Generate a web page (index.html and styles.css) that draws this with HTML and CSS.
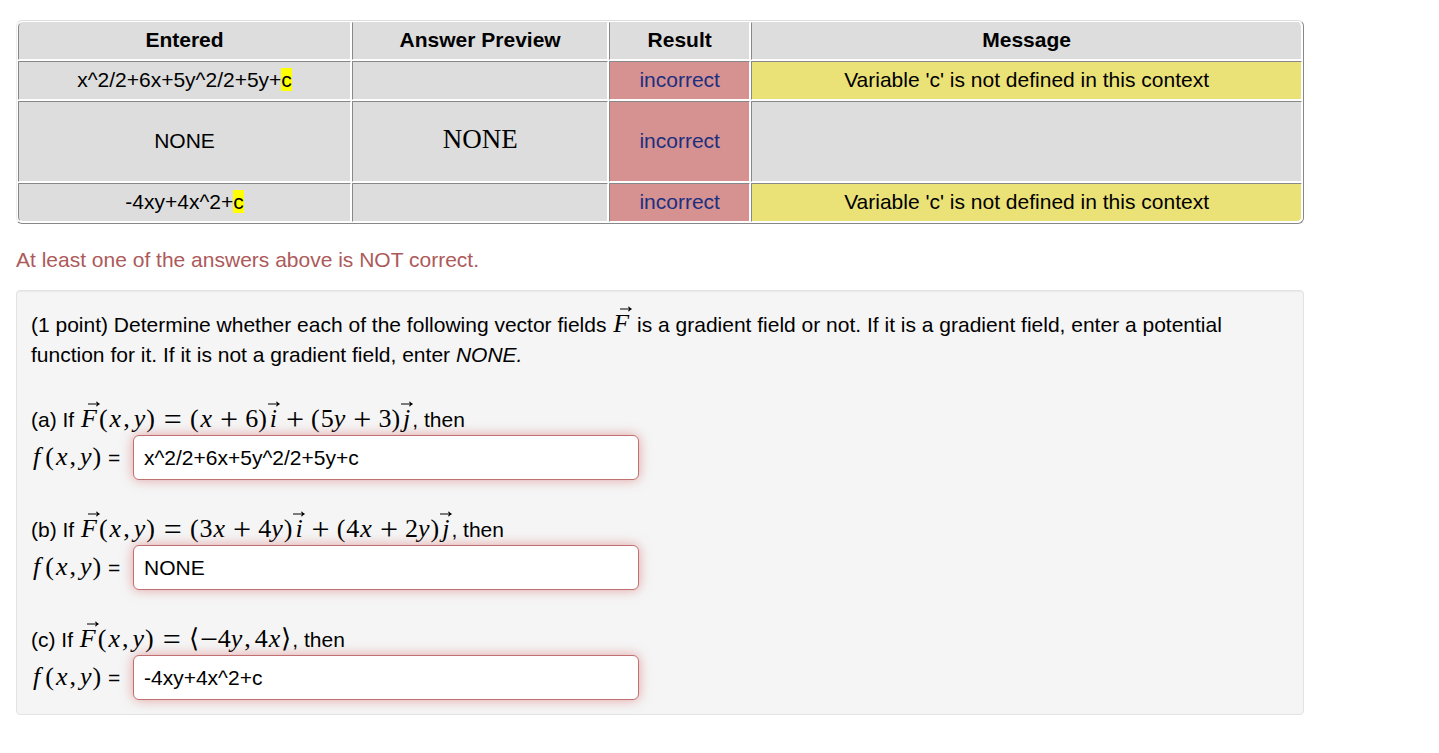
FILE: index.html
```
<!DOCTYPE html>
<html lang="en">

<head>
    <meta charset="UTF-8">
    <meta name="viewport" content="width=device-width, initial-scale=1.0">
    <title>Gradient Fields</title>
    <link rel="stylesheet" href="styles.css">
</head>

<body>
    <!-- arrow drawn over vector names -->
    <svg class="defs" width="0" height="0">
        <symbol id="arrow" viewBox="0 0 12 6">
            <path d="M0 3H11M8.5 0.8Q9.3 2.6 11.5 3Q9.3 3.4 8.5 5.2" fill="none" stroke="#000" stroke-width="1.1" />
        </symbol>
    </svg>

    <table class="results">
        <thead>
            <tr>
                <th class="col-entered">Entered</th>
                <th class="col-preview">Answer Preview</th>
                <th class="col-result">Result</th>
                <th>Message</th>
            </tr>
        </thead>
        <tbody>
            <tr>
                <td>x^2/2+6x+5y^2/2+5y+<span class="mark">c</span></td>
                <td></td>
                <td class="incorrect"><a href="#answer1">incorrect</a></td>
                <td class="warning">Variable 'c' is not defined in this context</td>
            </tr>
            <tr class="tall">
                <td>NONE</td>
                <td><span class="math-text">NONE</span></td>
                <td class="incorrect"><a href="#answer2">incorrect</a></td>
                <td></td>
            </tr>
            <tr>
                <td>-4xy+4x^2+<span class="mark">c</span></td>
                <td></td>
                <td class="incorrect"><a href="#answer3">incorrect</a></td>
                <td class="warning">Variable 'c' is not defined in this context</td>
            </tr>
        </tbody>
    </table>

    <p class="summary">At least one of the answers above is NOT correct.</p>

    <form class="problem">
        <p>(1 point) Determine whether each of the following vector fields <span class="math"><span class="vec"><i class="F">F</i><svg><use href="#arrow" /></svg></span></span> is a gradient field or not. If it is a gradient field, enter a potential function for it. If it is not a gradient field, enter <em>NONE.</em></p>

        <div class="part">
            <p>(a) If <span class="math"><span class="vec"><i class="F">F</i><svg><use href="#arrow" /></svg></span><b>(</b><i class="x">x</i><span class="comma">,</span><i class="y">y</i><b>)</b><span class="rel">=</span><b>(</b><i class="x">x</i><span class="op">+</span>6<b>)</b><span class="vec small"><i class="i">i</i><svg><use href="#arrow" /></svg></span><span class="op">+</span><b>(</b>5<i class="y">y</i><span class="op">+</span>3<b>)</b><span class="vec small"><i class="j">j</i><svg><use href="#arrow" /></svg></span></span>, then</p>
            <div class="answer">
                <label for="answer1"><span class="math"><i class="f">f</i><b>(</b><i class="x">x</i><span class="comma">,</span><i class="y">y</i><b>)</b></span> =</label>
                <input type="text" id="answer1" value="x^2/2+6x+5y^2/2+5y+c">
            </div>
        </div>

        <div class="part">
            <p>(b) If <span class="math"><span class="vec"><i class="F">F</i><svg><use href="#arrow" /></svg></span><b>(</b><i class="x">x</i><span class="comma">,</span><i class="y">y</i><b>)</b><span class="rel">=</span><b>(</b>3<i class="x">x</i><span class="op">+</span>4<i class="y">y</i><b>)</b><span class="vec small"><i class="i">i</i><svg><use href="#arrow" /></svg></span><span class="op">+</span><b>(</b>4<i class="x">x</i><span class="op">+</span>2<i class="y">y</i><b>)</b><span class="vec small"><i class="j">j</i><svg><use href="#arrow" /></svg></span></span>, then</p>
            <div class="answer">
                <label for="answer2"><span class="math"><i class="f">f</i><b>(</b><i class="x">x</i><span class="comma">,</span><i class="y">y</i><b>)</b></span> =</label>
                <input type="text" id="answer2" value="NONE">
            </div>
        </div>

        <div class="part">
            <p>(c) If <span class="math"><span class="vec"><i class="F">F</i><svg><use href="#arrow" /></svg></span><b>(</b><i class="x">x</i><span class="comma">,</span><i class="y">y</i><b>)</b><span class="rel">=</span><b>⟨</b><span class="neg">−</span>4<i class="y">y</i><span class="comma">,</span>4<i class="x">x</i><b>⟩</b></span>, then</p>
            <div class="answer">
                <label for="answer3"><span class="math"><i class="f">f</i><b>(</b><i class="x">x</i><span class="comma">,</span><i class="y">y</i><b>)</b></span> =</label>
                <input type="text" id="answer3" value="-4xy+4x^2+c">
            </div>
        </div>
    </form>
</body>

</html>
```
FILE: styles.css
```
* {
    box-sizing: border-box;
}

body {
    margin: 20px 135px 20px 16px;
    font-family: "Liberation Sans", Arial, sans-serif;
    font-size: 21px;
    line-height: 30px;
    color: #000;
    background-color: #fff;
}

p {
    margin: 0;
}

.defs {
    position: absolute;
}

/* results table */
.results {
    width: 100%;
    table-layout: fixed;
    border: 1px solid;
    border-color: #ddd #888 #888 #eee;
    border-radius: 6px;
    border-spacing: 1px;
}

.results th,
.results td {
    height: 39px;
    padding: 2px 8px 4px;
    border: 1px solid;
    border-color: #888 #fff #fff #888;
    background-color: #ddd;
    text-align: center;
    vertical-align: middle;
}

.results th {
    height: 38px;
    border-top-color: #ddd;
}

.results .tall td {
    height: 81px;
}

.col-entered {
    width: 26%;
}

.col-preview {
    width: 20%;
}

.col-result {
    width: 11%;
}

.results th:first-child {
    border-top-left-radius: 5px;
}

.results th:last-child {
    border-top-right-radius: 5px;
}

.results tr:last-child td:first-child {
    border-bottom-left-radius: 5px;
}

.results tr:last-child td:last-child {
    border-bottom-right-radius: 5px;
}

.results .incorrect {
    background-color: #d69191;
}

.results .warning {
    background-color: #ebe277;
}

.incorrect a {
    color: #1b2f7f;
    text-decoration: none;
}

.mark {
    background-color: #ff0;
}

.summary {
    margin: 21px 0 15px;
    color: #ad5a5a;
}

/* problem text */
.problem {
    display: flex;
    flex-direction: column;
    gap: 35px;
    padding: 19px 14px 14px;
    border: 1px solid #e3e3e3;
    border-radius: 4px;
    background-color: #f5f5f5;
    box-shadow: inset 0 1px 1px rgba(0, 0, 0, 0.05);
}

.answer {
    display: flex;
    align-items: center;
}

.answer label {
    width: 102px;
    white-space: nowrap;
}

.answer input {
    width: 506px;
    height: 45px;
    padding: 0 10px;
    border: 1px solid #c07070;
    border-radius: 6px;
    background-color: #fff;
    box-shadow: 0 0 12px rgba(210, 80, 80, 0.5);
    font: inherit;
    color: #000;
}

/* formulas */
.math,
.math-text {
    font-family: "Liberation Serif", "Times New Roman", serif;
    font-size: 26px;
    line-height: 1;
    white-space: nowrap;
}

.math-text {
    font-size: 27px;
}

.math b {
    padding-right: 1px;
    font-weight: normal;
}

.math .x {
    padding: 0 1px;
}

.math .y {
    padding-right: 1px;
}

.math .F {
    padding: 0 2px 0 1px;
}

.math .f {
    padding: 0 5px 0 2px;
}

.math .i,
.math .j {
    padding: 0 2px;
}

.comma {
    padding: 0 4px 0 1px;
}

.op,
.rel,
.neg {
    font-size: 32px;
    line-height: 0;
    vertical-align: -3px;
}

.op {
    padding: 0 7px;
}

.rel {
    padding: 0 8px;
}

.vec {
    position: relative;
}

.vec svg {
    position: absolute;
    top: -3px;
    left: 8px;
    width: 12px;
    height: 6px;
}

.vec.small svg {
    left: 0;
}
```
